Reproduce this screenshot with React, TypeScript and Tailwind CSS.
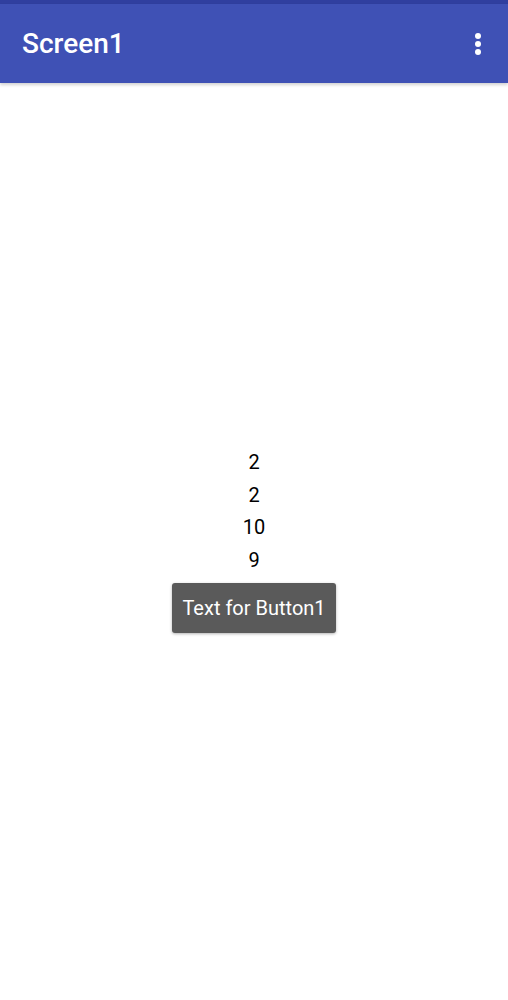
import React from 'react';

const values = ['2', '2', '10', '9'];

const App: React.FC = () => {
  return (
    <div className="flex h-[1000px] flex-col bg-white font-['Roboto',sans-serif]">
      <div className="h-[4px] bg-[#303f9f]" />
      <header className="relative z-10 flex h-[79px] items-center justify-between bg-[#3f51b5] pl-[22px] pr-[26px] shadow-[0_2px_3px_rgba(0,0,0,0.18)]">
        <h1 className="text-[28px] font-medium leading-none text-white">Screen1</h1>
        <svg width="8" height="24" viewBox="0 0 8 24" fill="white" aria-label="More options">
          <circle cx="4" cy="4" r="3" />
          <circle cx="4" cy="12" r="3" />
          <circle cx="4" cy="20" r="3" />
        </svg>
      </header>
      <main className="flex flex-1 flex-col items-center justify-center pb-[4px]">
        {values.map((v, i) => (
          <div key={i} className="h-[32.5px] text-[20px] leading-[32.5px] text-black">
            {v}
          </div>
        ))}
        <button
          type="button"
          className="mt-[7px] h-[50px] w-[164px] rounded-[3px] bg-[#5a5a5a] text-[20px] text-white shadow-[0_1px_3px_rgba(0,0,0,0.3)]"
        >
          Text for Button1
        </button>
      </main>
    </div>
  );
};

export default App;
